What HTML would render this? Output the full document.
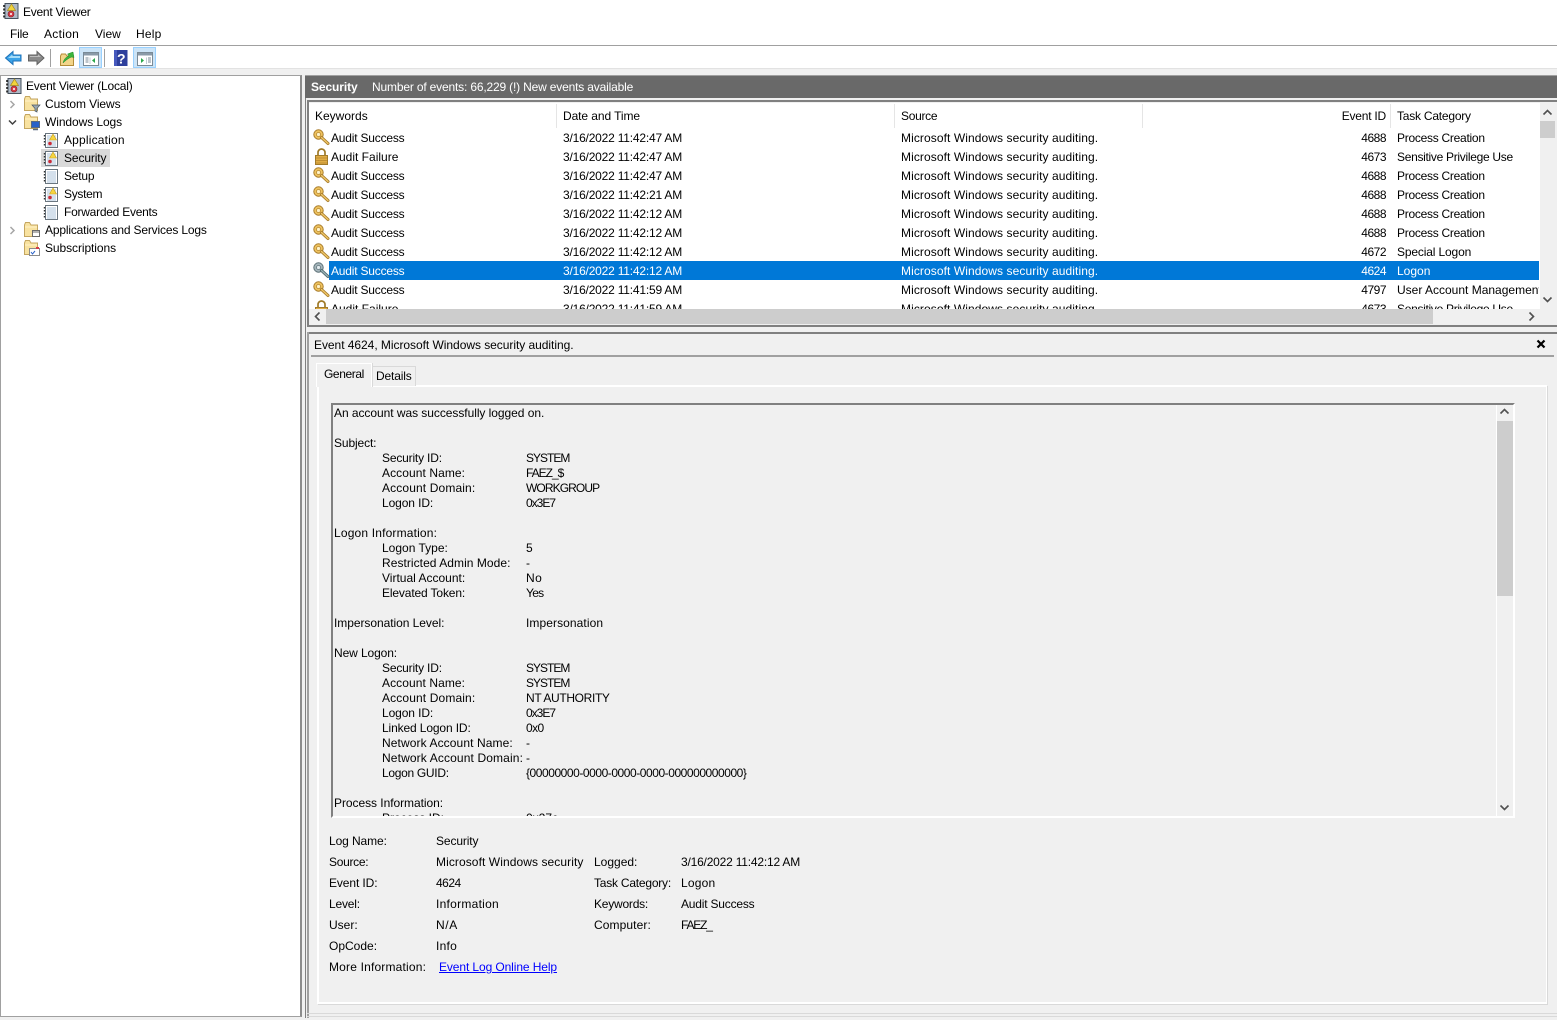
<!DOCTYPE html>
<html><head><meta charset="utf-8"><title>Event Viewer</title>
<style>
*{box-sizing:border-box}
html,body{margin:0;padding:0;width:1557px;height:1020px;overflow:hidden;background:#f0f0f0;font:12px/16px "Liberation Sans",sans-serif;color:#000}
.a,.t{position:absolute}
.t{white-space:nowrap;height:16px;line-height:16px}
svg{position:absolute;overflow:visible}
.r{position:absolute;left:0;width:1231px;height:19px}
.r span{position:absolute;top:2px;white-space:nowrap;line-height:16px}
.c1{left:22px;letter-spacing:-.2px}.c2{left:254px;letter-spacing:-.2px}.c3{left:592px;letter-spacing:.085px}.c4{left:1017px;width:60px;text-align:right;letter-spacing:-.5px}.c5{left:1088px;letter-spacing:-.27px}
.r svg{left:4px;top:1px}
.sel{background:linear-gradient(#0078d7,#0078d7) 20px 0/1210px 19px no-repeat;color:#fff}
.l{left:334px}.i{left:382px}.v{left:526px}
.sy{letter-spacing:-1px}
a{color:#00f;text-decoration:underline}
</style></head><body>
<svg width="0" height="0" style="position:absolute"><defs>
<g id="key"><circle cx="5.5" cy="5.5" r="4.7" fill="#eec25e" stroke="#a87c2c"/><circle cx="5.5" cy="5.5" r="2" fill="#fff3c8" stroke="#b78a35" stroke-width=".8"/><path d="M8.5 8.5L15 14.5" stroke="#a87c2c" stroke-width="3" stroke-linecap="round"/><path d="M8.5 8.5L15 14.5" stroke="#f0c869" stroke-width="1.3" stroke-linecap="round"/></g>
<g id="keys"><circle cx="5.5" cy="5.5" r="4.7" fill="#a5b5bb" stroke="#5e7278"/><circle cx="5.5" cy="5.5" r="2" fill="#e2eaee" stroke="#64787e" stroke-width=".8"/><path d="M8.5 8.5L15 14.5" stroke="#4f6a70" stroke-width="3" stroke-linecap="round"/><path d="M8.5 8.5L15 14.5" stroke="#9ab0b4" stroke-width="1.3" stroke-linecap="round"/></g>
<g id="lock"><path d="M5 8V4.5a3.5 3.5 0 0 1 7 0V8" fill="none" stroke="#9f7a28" stroke-width="1.7"/><rect x="2.5" y="7.5" width="12" height="9" fill="#e0ad45" stroke="#a27b2b"/><path d="M3 10h11M3 12.5h11M3 15h11" stroke="#c08f32"/></g>
<g id="log"><rect x="1.5" y=".5" width="12" height="14" fill="#fff" stroke="#6a7680"/><path d="M.5 2v1.500M.5 5v1.500M.5 8v1.500M.5 11v1.500" stroke="#333" stroke-width="1.400"/><path d="M3 3h9M3 5h9M3 7h9M3 9h9M3 11h9M3 13h9" stroke="#a9c0d8"/></g>
<g id="logw"><use href="#log"/><path d="M5.500 7l3.500-6 3.500 6z" fill="#f7d540" stroke="#c9a21c" stroke-width=".6"/><circle cx="6" cy="10.500" r="1.800" fill="#cc2a36"/></g>
<g id="root"><rect x="2" y=".5" width="13" height="15" fill="#aeb9c6" stroke="#46525e"/><path d="M1 2v2M1 5.500v2M1 9v2M1 12.500v2" stroke="#222" stroke-width="1.600"/><path d="M8.500 1l4 6.500h-8z" fill="#f2d43a" stroke="#a58a1c" stroke-width=".7"/><circle cx="8" cy="11" r="3" fill="#d63b46" stroke="#8a1f28" stroke-width=".6"/><circle cx="8" cy="11" r="1" fill="#fff"/></g>
<g id="folder"><path d="M.5 3V14.500H13.500V3H7L5.500 .5H1.500z" fill="#f8e2a0" stroke="#c4a660"/><path d="M1 5h12" stroke="#fff3c8"/></g>
</defs></svg>

<!-- title -->
<div class="a" style="left:0;top:0;width:1557px;height:45px;background:#fff"></div>
<svg style="left:3px;top:3px" width="16" height="16"><use href="#root"/></svg>
<div class="t" style="left:23px;top:4px;letter-spacing:-.25px">Event Viewer</div>
<div class="t" style="left:10px;top:26px;letter-spacing:-.2px">File</div>
<div class="t" style="left:44px;top:26px;letter-spacing:.3px">Action</div>
<div class="t" style="left:95px;top:26px">View</div>
<div class="t" style="left:136px;top:26px;letter-spacing:.2px">Help</div>
<div class="a" style="left:0;top:45px;width:1557px;height:1px;background:#a0a0a0"></div>
<!-- toolbar -->
<div class="a" style="left:0;top:46px;width:1557px;height:22px;background:#fff"></div>
<div class="a" style="left:0;top:68px;width:1557px;height:1px;background:#e2e2e2"></div>
<svg style="left:5px;top:50px" width="17" height="16"><path d="M.5 8L8 1.500V5H16V11H8V14.500z" fill="#3ba3e8" stroke="#1c70b8"/><path d="M3 8L7.500 4.500V6H15V8z" fill="#a5dcf8"/></svg>
<svg style="left:28px;top:50px" width="17" height="16"><path d="M16 8L9 1.500V5H.5V11H9V14.500z" fill="#8a8a8a" stroke="#606060"/><path d="M2 6H10V4.500L13 7H2z" fill="#bdbdbd"/></svg>
<div class="a" style="left:50px;top:49px;width:1px;height:18px;background:#a0a0a0"></div>
<svg style="left:60px;top:51px" width="15" height="15"><path d="M.5 5V14.500H13.500V5H7L5.500 3H1.500z" fill="#f3d58a" stroke="#b48d38"/><path d="M3 12C4 8 6 6 9 5L7.500 3 13 1 14 6.500 11.500 6C9 7 6 9 3 12z" fill="#3cb43c" stroke="#1f8a2a" stroke-width=".5"/></svg>
<div class="a" style="left:79px;top:47px;width:23px;height:21px;background:#cce4f7;border:1px solid #99d1ff"></div>
<svg style="left:83px;top:52px" width="16" height="14"><rect x=".5" y=".5" width="15" height="13" fill="#fff" stroke="#7a8a96"/><rect x="1" y="1" width="14" height="2.500" fill="#8a9aa8"/><path d="M2.500 6h3M2.500 8h3M2.500 10h3" stroke="#7a8a96"/><path d="M7 5.500V12" stroke="#c2ccd4"/><path d="M12 6v5L9 8.500z" fill="#2aa84a"/></svg>
<div class="a" style="left:104px;top:49px;width:1px;height:18px;background:#a0a0a0"></div>
<svg style="left:114px;top:50px" width="14" height="16"><rect width="13.500" height="16" fill="#2d3f9c"/><rect x="0" width="3" height="16" fill="#4659bd"/><text x="3" y="13.500" font-family="Liberation Sans" font-weight="bold" font-size="14" fill="#fff">?</text></svg>
<div class="a" style="left:133px;top:47px;width:23px;height:21px;background:#cce4f7;border:1px solid #99d1ff"></div>
<svg style="left:137px;top:52px" width="16" height="14"><rect x=".5" y=".5" width="15" height="13" fill="#fff" stroke="#7a8a96"/><rect x="1" y="1" width="14" height="2.500" fill="#8a9aa8"/><path d="M11 6h3M11 8h3M11 10h3" stroke="#7a8a96"/><path d="M9.500 5.500V12" stroke="#c2ccd4"/><path d="M4 6v5L7 8.500z" fill="#2aa84a"/></svg>

<!-- left panel -->
<div class="a" style="left:0;top:75px;width:302px;height:942px;background:#fff;border:1px solid #a0a0a0;border-right:2px solid #8c8c8c"></div>
<svg style="left:6px;top:78px" width="16" height="16"><use href="#root"/></svg>
<div class="t" style="left:26px;top:78px;letter-spacing:-.2px">Event Viewer (Local)</div>
<svg style="left:9px;top:100px" width="7" height="9"><path d="M1.500 1L5 4.500 1.500 8" fill="none" stroke="#a6a6a6" stroke-width="1.500"/></svg>
<svg style="left:24px;top:96px" width="16" height="16"><use href="#folder"/><path d="M8 9h8l-3 3.500V16l-2-1v-2.500z" fill="#9aa7b0" stroke="#4e5a64" stroke-width=".7"/></svg>
<div class="t" style="left:45px;top:96px;letter-spacing:-.08px">Custom Views</div>
<svg style="left:8px;top:119px" width="9" height="7"><path d="M1 1.500L4.500 5 8 1.500" fill="none" stroke="#404040" stroke-width="1.500"/></svg>
<svg style="left:24px;top:114px" width="16" height="16"><use href="#folder"/><rect x="7.500" y="7.500" width="8" height="6" fill="#2a62c8" stroke="#5a6a80"/><path d="M9 15.500h5" stroke="#5a6a80" stroke-width="1.500"/></svg>
<div class="t" style="left:45px;top:114px;letter-spacing:-.08px">Windows Logs</div>
<svg style="left:44px;top:133px" width="15" height="15"><use href="#logw"/></svg>
<div class="t" style="left:64px;top:132px;letter-spacing:.18px">Application</div>
<div class="a" style="left:41px;top:149px;width:69px;height:18px;background:#d9d9d9"></div>
<svg style="left:44px;top:151px" width="15" height="15"><use href="#logw"/></svg>
<div class="t" style="left:64px;top:150px;letter-spacing:-.12px">Security</div>
<svg style="left:44px;top:169px" width="15" height="15"><use href="#log"/></svg>
<div class="t" style="left:64px;top:168px;letter-spacing:-.2px">Setup</div>
<svg style="left:44px;top:187px" width="15" height="15"><use href="#logw"/></svg>
<div class="t" style="left:64px;top:186px;letter-spacing:-.3px">System</div>
<svg style="left:44px;top:205px" width="15" height="15"><use href="#log"/></svg>
<div class="t" style="left:64px;top:204px;letter-spacing:-.25px">Forwarded Events</div>
<svg style="left:9px;top:226px" width="7" height="9"><path d="M1.500 1L5 4.500 1.500 8" fill="none" stroke="#a6a6a6" stroke-width="1.500"/></svg>
<svg style="left:24px;top:222px" width="16" height="16"><use href="#folder"/><rect x="8.500" y="8.500" width="7" height="6" fill="#fff" stroke="#6a6a6a"/><path d="M9 10h6" stroke="#6a6a6a"/></svg>
<div class="t" style="left:45px;top:222px;letter-spacing:-.17px">Applications and Services Logs</div>
<svg style="left:24px;top:240px" width="16" height="16"><use href="#folder"/><rect x="5.500" y="8.500" width="10" height="7" fill="#fff" stroke="#8a8a8a"/><path d="M7 12l1.500 2 2.500-3" fill="none" stroke="#2a62c8"/><rect x="12" y="7" width="3" height="2" fill="#d63b46"/></svg>
<div class="t" style="left:45px;top:240px;letter-spacing:-.08px">Subscriptions</div>

<!-- right -->
<div class="a" style="left:305px;top:75px;width:1px;height:943px;background:#808080"></div>
<div class="a" style="left:305px;top:75px;width:1252px;height:1px;background:#a0a0a0"></div>
<div class="a" style="left:305px;top:76px;width:1252px;height:22px;background:#696969"></div>
<div class="t" style="left:311px;top:79px;color:#fff;font-weight:bold;font-size:12px;letter-spacing:-.1px">Security</div>
<div class="t" style="left:372px;top:79px;color:#fff;letter-spacing:-.17px">Number of events: 66,229 (!) New events available</div>
<!-- list box -->
<div class="a" style="left:307px;top:100px;width:1250px;height:227px;background:#f0f0f0;border:2px solid #808080;border-right:0;border-bottom:2px solid #808080"></div>
<div class="a" style="left:309px;top:103px;width:1231px;height:206px;background:#fff;overflow:hidden">
 <div class="a" style="left:247px;top:1px;width:1px;height:24px;background:#e5e5e5"></div>
 <div class="a" style="left:585px;top:1px;width:1px;height:24px;background:#e5e5e5"></div>
 <div class="a" style="left:833px;top:1px;width:1px;height:24px;background:#e5e5e5"></div>
 <div class="a" style="left:1081px;top:1px;width:1px;height:24px;background:#e5e5e5"></div>
 <div class="t" style="left:6px;top:5px">Keywords</div>
 <div class="t" style="left:254px;top:5px;letter-spacing:-.08px">Date and Time</div>
 <div class="t" style="left:592px;top:5px;letter-spacing:-.3px">Source</div>
 <div class="t" style="left:1017px;top:5px;width:60px;text-align:right;letter-spacing:-.22px">Event ID</div>
 <div class="t" style="left:1088px;top:5px;letter-spacing:-.22px">Task Category</div>

 <div class="r" style="top:25px"><svg width="16" height="16"><use href="#key"/></svg><span class="c1">Audit Success</span><span class="c2">3/16/2022 11:42:47 AM</span><span class="c3">Microsoft Windows security auditing.</span><span class="c4">4688</span><span class="c5">Process Creation</span></div>
 <div class="r" style="top:44px"><svg width="16" height="16"><use href="#lock"/></svg><span class="c1" style="letter-spacing:0">Audit Failure</span><span class="c2">3/16/2022 11:42:47 AM</span><span class="c3">Microsoft Windows security auditing.</span><span class="c4">4673</span><span class="c5" style="letter-spacing:-.3px">Sensitive Privilege Use</span></div>
 <div class="r" style="top:63px"><svg width="16" height="16"><use href="#key"/></svg><span class="c1">Audit Success</span><span class="c2">3/16/2022 11:42:47 AM</span><span class="c3">Microsoft Windows security auditing.</span><span class="c4">4688</span><span class="c5">Process Creation</span></div>
 <div class="r" style="top:82px"><svg width="16" height="16"><use href="#key"/></svg><span class="c1">Audit Success</span><span class="c2">3/16/2022 11:42:21 AM</span><span class="c3">Microsoft Windows security auditing.</span><span class="c4">4688</span><span class="c5">Process Creation</span></div>
 <div class="r" style="top:101px"><svg width="16" height="16"><use href="#key"/></svg><span class="c1">Audit Success</span><span class="c2">3/16/2022 11:42:12 AM</span><span class="c3">Microsoft Windows security auditing.</span><span class="c4">4688</span><span class="c5">Process Creation</span></div>
 <div class="r" style="top:120px"><svg width="16" height="16"><use href="#key"/></svg><span class="c1">Audit Success</span><span class="c2">3/16/2022 11:42:12 AM</span><span class="c3">Microsoft Windows security auditing.</span><span class="c4">4688</span><span class="c5">Process Creation</span></div>
 <div class="r" style="top:139px"><svg width="16" height="16"><use href="#key"/></svg><span class="c1">Audit Success</span><span class="c2">3/16/2022 11:42:12 AM</span><span class="c3">Microsoft Windows security auditing.</span><span class="c4">4672</span><span class="c5" style="letter-spacing:-.15px">Special Logon</span></div>
 <div class="r sel" style="top:158px"><svg width="16" height="16"><use href="#keys"/></svg><span class="c1">Audit Success</span><span class="c2">3/16/2022 11:42:12 AM</span><span class="c3">Microsoft Windows security auditing.</span><span class="c4">4624</span><span class="c5" style="letter-spacing:0">Logon</span></div>
 <div class="r" style="top:177px"><svg width="16" height="16"><use href="#key"/></svg><span class="c1">Audit Success</span><span class="c2">3/16/2022 11:41:59 AM</span><span class="c3">Microsoft Windows security auditing.</span><span class="c4">4797</span><span class="c5" style="width:142px;overflow:hidden;letter-spacing:0">User Account Management</span></div>
 <div class="r" style="top:196px"><svg width="16" height="16"><use href="#lock"/></svg><span class="c1" style="letter-spacing:0">Audit Failure</span><span class="c2">3/16/2022 11:41:59 AM</span><span class="c3">Microsoft Windows security auditing.</span><span class="c4">4673</span><span class="c5" style="letter-spacing:-.3px">Sensitive Privilege Use</span></div>
</div>
<!-- v scroll -->
<svg style="left:1543px;top:109px" width="9" height="7"><path d="M.5 5.500L4.500 1.500 8.500 5.500" fill="none" stroke="#505050" stroke-width="1.600"/></svg>
<div class="a" style="left:1540px;top:121px;width:15px;height:17px;background:#cdcdcd"></div>
<svg style="left:1543px;top:296px" width="9" height="7"><path d="M.5 1.500L4.500 5.500 8.500 1.500" fill="none" stroke="#505050" stroke-width="1.600"/></svg>
<!-- h scroll -->
<div class="a" style="left:326px;top:309px;width:1107px;height:15px;background:#cdcdcd"></div>
<svg style="left:314px;top:312px" width="7" height="9"><path d="M5.500 .5L1.500 4.500 5.500 8.500" fill="none" stroke="#505050" stroke-width="1.600"/></svg>
<svg style="left:1528px;top:312px" width="7" height="9"><path d="M1.500 .5L5.500 4.500 1.500 8.500" fill="none" stroke="#505050" stroke-width="1.600"/></svg>

<!-- detail -->
<div class="a" style="left:307px;top:332px;width:1250px;height:2px;background:#808080"></div>
<div class="a" style="left:307px;top:332px;width:2px;height:686px;background:#a0a0a0"></div>
<div class="t" style="left:314px;top:337px;letter-spacing:-.04px">Event 4624, Microsoft Windows security auditing.</div>
<svg style="left:1536px;top:339px" width="10" height="10"><path d="M1.500 1.500L8.500 8.500M8.500 1.500L1.500 8.500" stroke="#000" stroke-width="2.200"/></svg>
<div class="a" style="left:311px;top:355px;width:1243px;height:2px;background:#a0a0a0"></div>
<!-- tab page -->
<div class="a" style="left:317px;top:385px;width:1230px;height:619px;border:2px solid #fff;border-right:1px solid #fff;box-shadow:1px 1px 0 #d9d9d9"></div>
<div class="a" style="left:372px;top:366px;width:44px;height:20px;border:1px solid #d9d9d9;border-bottom:0;background:#f0f0f0"></div>
<div class="t" style="left:376px;top:368px;letter-spacing:-.15px">Details</div>
<div class="a" style="left:316px;top:363px;width:56px;height:24px;background:#f0f0f0;border:1px solid #fff;border-bottom:0;box-shadow:1px 0 0 #d9d9d9"></div>
<div class="t" style="left:324px;top:366px;letter-spacing:-.4px">General</div>
<!-- text box -->
<div class="a" style="left:331px;top:403px;width:1184px;height:415px;border:2px solid #808080;border-right:2px solid #fff;border-bottom:2px solid #fff;background:#f0f0f0"></div>
<div class="a" style="left:333px;top:405px;width:1164px;height:411px;overflow:hidden">
<div style="position:absolute;left:-333px;top:-405px;width:1200px;height:900px">
<div class="t l" style="top:405px;letter-spacing:-.05px">An account was successfully logged on.</div>
<div class="t l" style="top:435px;letter-spacing:-.12px">Subject:</div>
<div class="t i" style="top:450px;letter-spacing:-.18px">Security ID:</div><div class="t v sy" style="top:450px">SYSTEM</div>
<div class="t i" style="top:465px;letter-spacing:.08px">Account Name:</div><div class="t v sy" style="top:465px">FAEZ_$</div>
<div class="t i" style="top:480px;letter-spacing:.13px">Account Domain:</div><div class="t v" style="top:480px;letter-spacing:-.9px">WORKGROUP</div>
<div class="t i" style="top:495px;letter-spacing:-.1px">Logon ID:</div><div class="t v sy" style="top:495px">0x3E7</div>
<div class="t l" style="top:525px;letter-spacing:.17px">Logon Information:</div>
<div class="t i" style="top:540px">Logon Type:</div><div class="t v" style="top:540px">5</div>
<div class="t i" style="top:555px;letter-spacing:.05px">Restricted Admin Mode:</div><div class="t v" style="top:555px">-</div>
<div class="t i" style="top:570px">Virtual Account:</div><div class="t v" style="top:570px;letter-spacing:.5px">No</div>
<div class="t i" style="top:585px;letter-spacing:-.14px">Elevated Token:</div><div class="t v" style="top:585px;letter-spacing:-.7px">Yes</div>
<div class="t l" style="top:615px;letter-spacing:-.05px">Impersonation Level:</div><div class="t v" style="top:615px;letter-spacing:.08px">Impersonation</div>
<div class="t l" style="top:645px;letter-spacing:-.1px">New Logon:</div>
<div class="t i" style="top:660px;letter-spacing:-.18px">Security ID:</div><div class="t v sy" style="top:660px">SYSTEM</div>
<div class="t i" style="top:675px;letter-spacing:.08px">Account Name:</div><div class="t v sy" style="top:675px">SYSTEM</div>
<div class="t i" style="top:690px;letter-spacing:.13px">Account Domain:</div><div class="t v" style="top:690px;letter-spacing:-.35px">NT AUTHORITY</div>
<div class="t i" style="top:705px;letter-spacing:-.1px">Logon ID:</div><div class="t v sy" style="top:705px">0x3E7</div>
<div class="t i" style="top:720px;letter-spacing:-.13px">Linked Logon ID:</div><div class="t v" style="top:720px;letter-spacing:-.6px">0x0</div>
<div class="t i" style="top:735px;letter-spacing:.1px">Network Account Name:</div><div class="t v" style="top:735px">-</div>
<div class="t i" style="top:750px;letter-spacing:.13px">Network Account Domain:</div><div class="t v" style="top:750px">-</div>
<div class="t i" style="top:765px;letter-spacing:-.3px">Logon GUID:</div><div class="t v" style="top:765px;letter-spacing:-.45px">{00000000-0000-0000-0000-000000000000}</div>
<div class="t l" style="top:795px;letter-spacing:-.05px">Process Information:</div>
<div class="t i" style="top:810px">Process ID:</div><div class="t v" style="top:810px">0x27c</div>
</div></div>
<div class="a" style="left:1496px;top:405px;width:1px;height:411px;background:#fff"></div>
<svg style="left:1500px;top:408px" width="9" height="7"><path d="M.5 5.500L4.500 1.500 8.500 5.500" fill="none" stroke="#505050" stroke-width="1.600"/></svg>
<div class="a" style="left:1497px;top:421px;width:16px;height:175px;background:#cdcdcd"></div>
<svg style="left:1500px;top:804px" width="9" height="7"><path d="M.5 1.500L4.500 5.500 8.500 1.500" fill="none" stroke="#505050" stroke-width="1.600"/></svg>
<!-- info -->
<div class="t" style="left:329px;top:833px;letter-spacing:-.1px">Log Name:</div><div class="t" style="left:436px;top:833px;letter-spacing:-.12px">Security</div>
<div class="t" style="left:329px;top:854px;letter-spacing:-.3px">Source:</div><div class="t" style="left:436px;top:854px;letter-spacing:.08px">Microsoft Windows security</div>
<div class="t" style="left:594px;top:854px">Logged:</div><div class="t" style="left:681px;top:854px;letter-spacing:-.2px">3/16/2022 11:42:12 AM</div>
<div class="t" style="left:329px;top:875px;letter-spacing:-.1px">Event ID:</div><div class="t" style="left:436px;top:875px;letter-spacing:-.5px">4624</div>
<div class="t" style="left:594px;top:875px;letter-spacing:-.22px">Task Category:</div><div class="t" style="left:681px;top:875px;letter-spacing:.2px">Logon</div>
<div class="t" style="left:329px;top:896px;letter-spacing:-.2px">Level:</div><div class="t" style="left:436px;top:896px;letter-spacing:.27px">Information</div>
<div class="t" style="left:594px;top:896px;letter-spacing:-.22px">Keywords:</div><div class="t" style="left:681px;top:896px;letter-spacing:-.2px">Audit Success</div>
<div class="t" style="left:329px;top:917px">User:</div><div class="t" style="left:436px;top:917px;letter-spacing:.6px">N/A</div>
<div class="t" style="left:594px;top:917px;letter-spacing:.1px">Computer:</div><div class="t" style="left:681px;top:917px;letter-spacing:-1.2px">FAEZ_</div>
<div class="t" style="left:329px;top:938px">OpCode:</div><div class="t" style="left:436px;top:938px;letter-spacing:.25px">Info</div>
<div class="t" style="left:329px;top:959px;letter-spacing:.18px">More Information:</div><div class="t" style="left:439px;top:959px;letter-spacing:-.1px"><a>Event Log Online Help</a></div>
<!-- bottom lines -->
<div class="a" style="left:307px;top:1013px;width:1250px;height:1px;background:#d9d9d9"></div>
<div class="a" style="left:307px;top:1016px;width:1250px;height:1px;background:#d9d9d9"></div>
</body></html>
